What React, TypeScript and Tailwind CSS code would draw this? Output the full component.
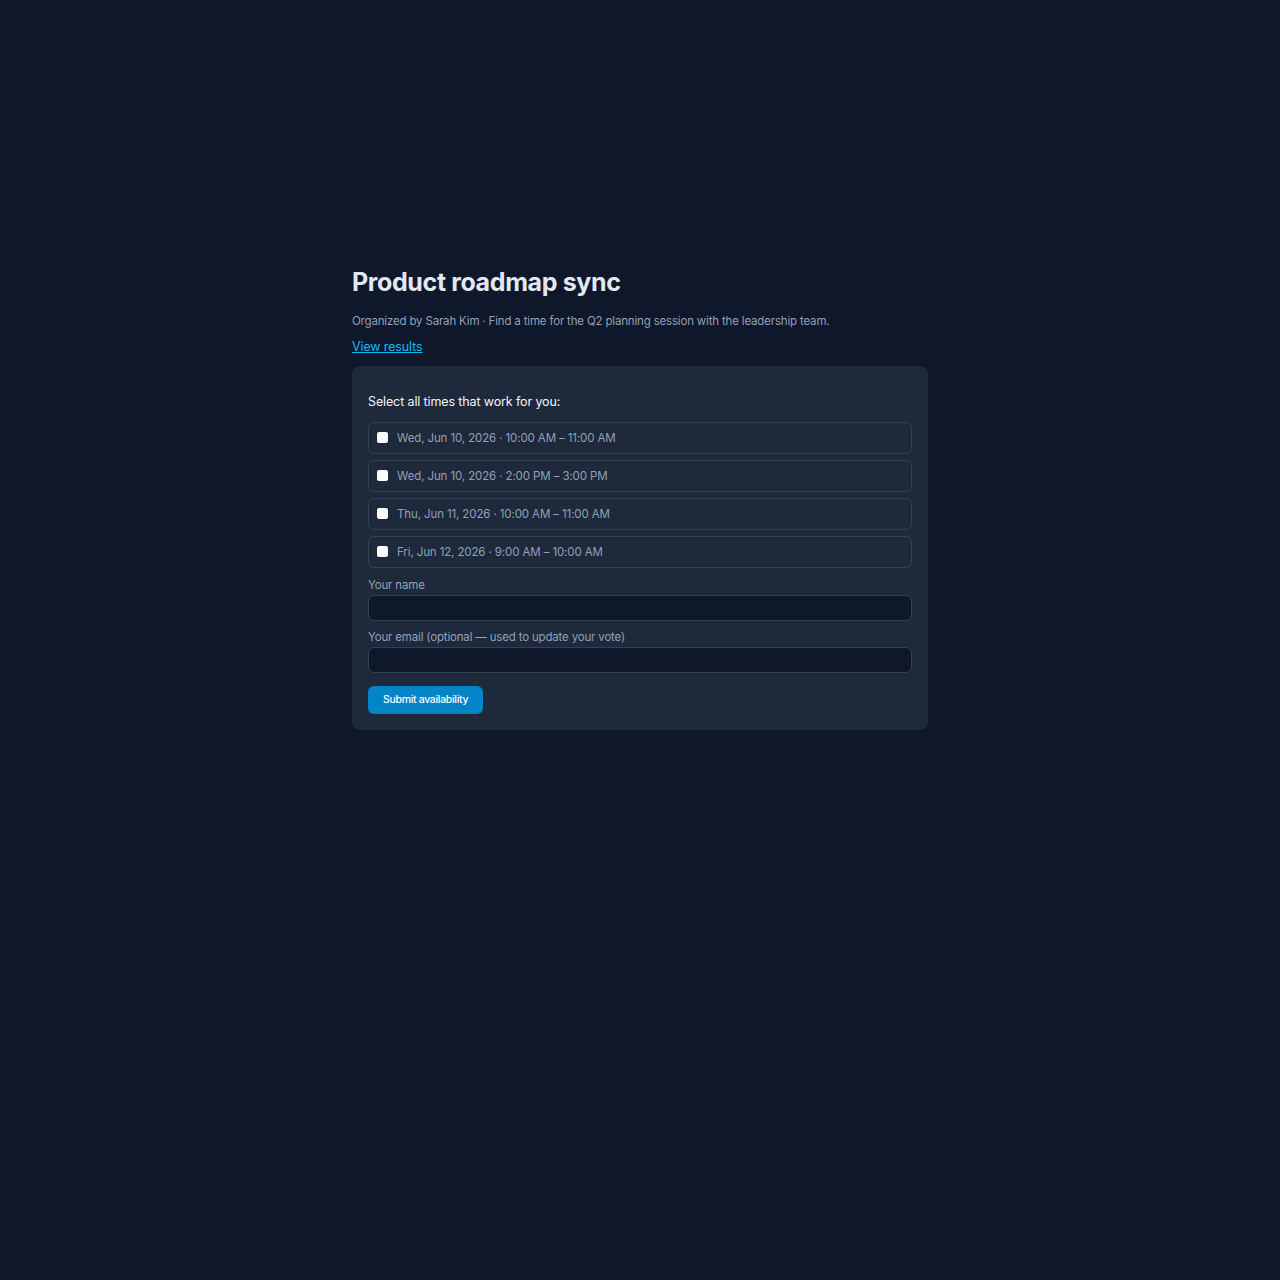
import React from 'react';

const slots = [
  'Wed, Jun 10, 2026 · 10:00 AM – 11:00 AM',
  'Wed, Jun 10, 2026 · 2:00 PM – 3:00 PM',
  'Thu, Jun 11, 2026 · 10:00 AM – 11:00 AM',
  'Fri, Jun 12, 2026 · 9:00 AM – 10:00 AM',
];

export default function App() {
  return (
    <div className="min-h-screen bg-[#0f172a] font-['Inter',sans-serif] text-slate-200">
      <div className="mx-auto max-w-[576px] pt-[266px]">
        <h1 className="text-[25px] font-bold leading-8 tracking-[-0.015em] text-slate-200">Product roadmap sync</h1>
        <p className="mt-[13px] text-[11.5px] leading-5 tracking-[-0.015em] text-slate-400">
          Organized by Sarah Kim · Find a time for the Q2 planning session with the leadership team.
        </p>
        <a href="#" className="mt-[6px] inline-block text-[12.5px] leading-5 tracking-[-0.01em] text-sky-400 underline">
          View results
        </a>
        <form className="mt-[9px] rounded-lg bg-[#1e293b] px-4 pb-4 pt-[26px]">
          <fieldset>
            <legend className="text-[12.5px] leading-5 tracking-[-0.01em] text-slate-100">
              Select all times that work for you:
            </legend>
            <div className="mt-[10px] flex flex-col gap-[6px]">
              {slots.map((s) => (
                <label
                  key={s}
                  className="flex h-[32px] items-center gap-[9px] rounded-md border border-slate-700 px-[8px] text-[11.5px] tracking-[-0.01em] text-slate-400"
                >
                  <input type="checkbox" className="-mt-px h-[11px] w-[11px] appearance-none rounded-[2px] bg-white" />
                  <span className="pt-px">{s}</span>
                </label>
              ))}
            </div>
          </fieldset>
          <label className="mt-[7px] block text-[11.5px] leading-5 tracking-[-0.015em] text-slate-400">Your name</label>
          <input type="text" className="block h-[26px] w-full rounded-md border border-slate-700 bg-[#0f172a]" />
          <label className="mt-[6px] block text-[11.5px] leading-5 tracking-[-0.015em] text-slate-400">
            Your email (optional — used to update your vote)
          </label>
          <input type="email" className="block h-[26px] w-full rounded-md border border-slate-700 bg-[#0f172a]" />
          <button
            type="button"
            className="mt-[13px] h-[28px] rounded-md bg-[#0284c7] px-[15px] text-[10.5px] font-medium tracking-[-0.03em] text-white"
          >
            Submit availability
          </button>
        </form>
      </div>
    </div>
  );
}
